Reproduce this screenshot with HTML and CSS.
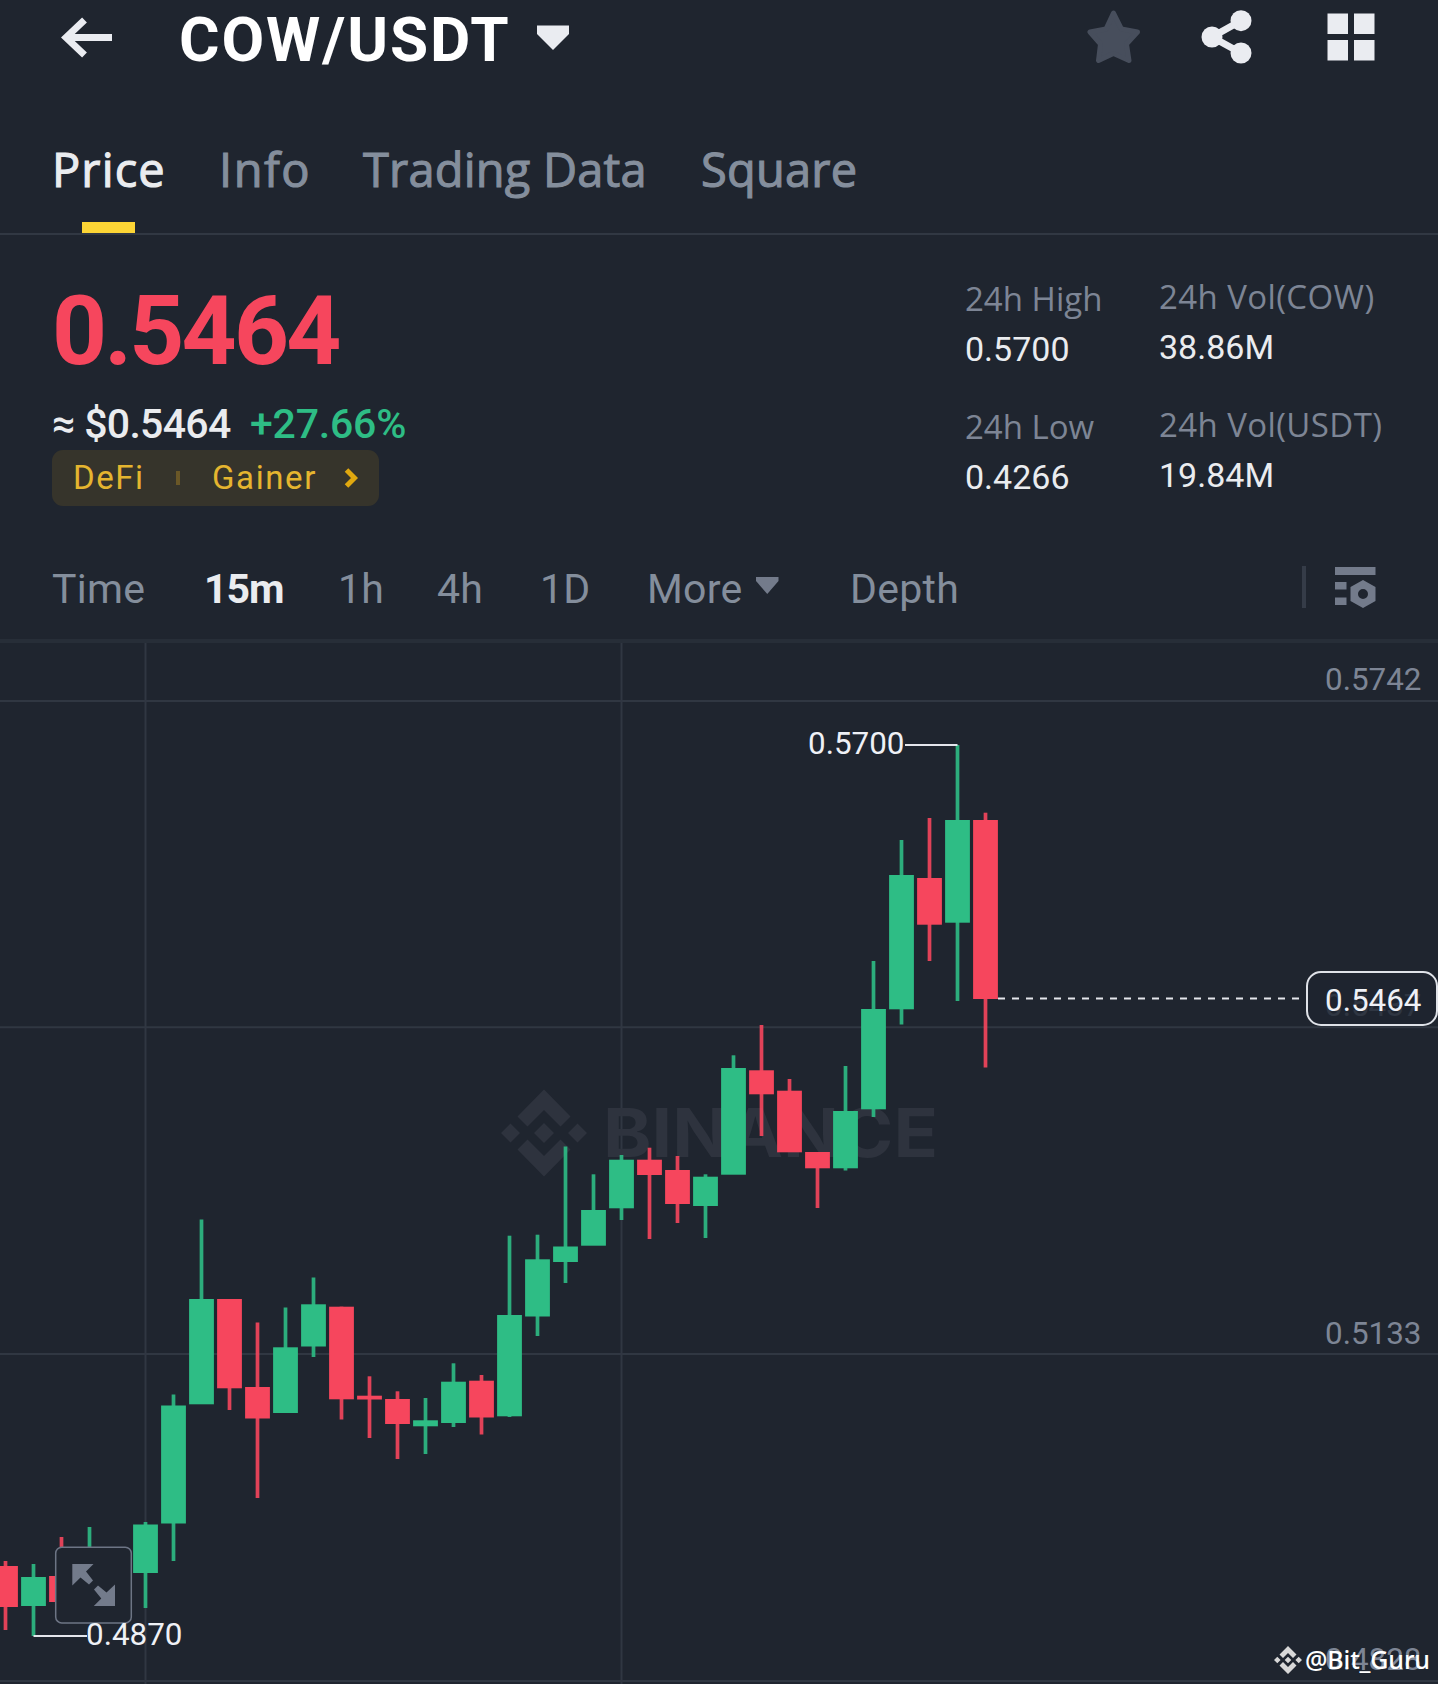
FILE: index.html
```html
<!DOCTYPE html>
<html lang="en">

<head>
    <meta charset="UTF-8">
    <meta name="viewport" content="width=device-width, initial-scale=1.0">
    <title>COW/USDT</title>
    <link rel="stylesheet" href="styles.css">
</head>

<body>
    <header class="header">
        <svg class="back" width="52" height="74" viewBox="61 0 52 74">
            <path d="M112 37.500H66M84.500 20L66 37.500L84.500 55" />
        </svg>
        <h1>COW/USDT</h1>
        <svg class="caret" width="32" height="74" viewBox="537 0 32 74">
            <path d="M537 25.500H569V34L553 50L537 34Z" />
        </svg>
        <div class="actions">
            <svg class="star" width="54" height="74" viewBox="1087 0 54 74">
                <path d="M1113.500 13L1121.500 29L1137.500 32L1126.500 44L1129 60.500L1113.500 53.500L1098.500 60.500L1100.500 44L1090 32L1106 29Z" />
            </svg>
            <svg width="52" height="74" viewBox="1201 0 52 74">
                <path class="share-line" d="M1241 20.700L1212 37L1241 53" />
                <circle cx="1241" cy="20.700" r="10.500" />
                <circle cx="1212" cy="37" r="10.500" />
                <circle cx="1241" cy="53" r="10.500" />
            </svg>
            <svg width="48" height="74" viewBox="1327 0 48 74">
                <path d="M1327.500 13.500h20.500v20.500h-20.500zM1354 13.500h20.500v20.500h-20.500zM1327.500 40h20.500v20.500h-20.500zM1354 40h20.500v20.500h-20.500z" />
            </svg>
        </div>
    </header>

    <nav class="tabs">
        <span class="tab active">Price</span>
        <span class="tab tab-info">Info</span>
        <span class="tab">Trading Data</span>
        <span class="tab">Square</span>
    </nav>

    <section class="summary">
        <div class="price-box">
            <div class="price">0.5464</div>
            <div class="sub-price">
                <span class="usd">≈ $0.5464</span>
                <span class="change">+27.66%</span>
            </div>
            <div class="tags">
                <span class="tag-defi">DeFi</span>
                <i class="tag-line"></i>
                <span class="tag-gainer">Gainer</span>
                <svg width="14" height="20" viewBox="0 0 14 20">
                    <path d="M2.500 2L10.500 10L2.500 18" />
                </svg>
            </div>
        </div>
        <div class="stats">
            <div class="stat">
                <span class="label">24h High</span>
                <span class="value">0.5700</span>
            </div>
            <div class="stat">
                <span class="label">24h Low</span>
                <span class="value">0.4266</span>
            </div>
        </div>
        <div class="stats stats-vol">
            <div class="stat">
                <span class="label">24h Vol(COW)</span>
                <span class="value">38.86M</span>
            </div>
            <div class="stat">
                <span class="label">24h Vol(USDT)</span>
                <span class="value">19.84M</span>
            </div>
        </div>
    </section>

    <nav class="intervals">
        <span>Time</span>
        <span class="active">15m</span>
        <span>1h</span>
        <span>4h</span>
        <span>1D</span>
        <span>More</span>
        <svg width="23" height="17" viewBox="0 0 23 17">
            <path d="M0 0H22.500V4L11.250 17L0 4Z" />
        </svg>
        <span>Depth</span>
        <i class="divider"></i>
        <svg width="41" height="42" viewBox="1335 566 41 42">
            <path d="M1335 567h40.500v8h-40.500zM1335 582h11.500v7.500h-11.500zM1335 597.500h11.500v7.500h-11.500z" />
            <path fill-rule="evenodd" d="M1363 580L1375.500 587V601L1363 608L1350.500 601V587ZM1363 589a5 5 0 1 0 0 10a5 5 0 1 0 0 -10Z" />
        </svg>
    </nav>

    <main class="chart">
        <svg id="chart" width="1438" height="1041" viewBox="0 643 1438 1041">
            <g class="grid">
                <path d="M0 701H1438M0 1027.300H1438M0 1354H1438M0 1681H1438" />
                <path d="M145.500 643V1684M621.500 643V1684" />
            </g>

            <g class="watermark">
                <path d="M544 1089.500L570.500 1116.500L560.500 1126.500L544 1110L527.500 1126.500L517.500 1116.500Z" />
                <path d="M544 1176.500L570.500 1149.500L560.500 1139.500L544 1156L527.500 1139.500L517.500 1149.500Z" />
                <path d="M510.500 1123.500L520 1133L510.500 1142.500L501 1133ZM544 1123L554 1133L544 1143L534 1133ZM577.500 1123.500L587 1133L577.500 1142.500L568 1133Z" />
                <text x="603" y="1157" textLength="335" lengthAdjust="spacingAndGlyphs">BINANCE</text>
            </g>

            <g id="candles"></g>

            <g class="axis">
                <text x="1325" y="690">0.5742</text>
                <text x="1325" y="1016">0.5437</text>
                <text x="1325" y="1344">0.5133</text>
                <text x="1325" y="1670">0.4828</text>
            </g>

            <path class="leader" d="M905 745H957.500M33.500 1636H87" />
            <text class="mark" x="808" y="754">0.5700</text>

            <path class="last-line" d="M998 998.500H1300" />
            <rect class="last-box" x="1307" y="972" width="130" height="53" rx="14" />
            <text class="mark" x="1325" y="1011">0.5464</text>

            <g class="expand">
                <rect x="55.700" y="1547.300" width="75.600" height="75.600" rx="6" />
                <path d="M72.300 1564H93.500L86 1571.500L93 1580.500L89 1584.500L80.500 1577.500L72.300 1585.500Z" />
                <path d="M115 1606H93.800L101.300 1598.500L94 1589.500L98 1585.500L106.500 1592.500L115 1584.500Z" />
            </g>
            <text class="mark" x="86" y="1645">0.4870</text>

            <g class="author">
                <path d="M1288 1646L1296.500 1654.500L1293 1658L1288 1653L1283 1658L1279.500 1654.500ZM1288 1674L1296.500 1665.500L1293 1662L1288 1667L1283 1662L1279.500 1665.500ZM1277.300 1656.700L1280.600 1660L1277.300 1663.300L1274 1660ZM1288 1656.700L1291.300 1660L1288 1663.300L1284.700 1660ZM1298.700 1656.700L1302 1660L1298.700 1663.300L1295.400 1660Z" />
                <text x="1305" y="1669" textLength="125">@Bit_Guru</text>
            </g>
        </svg>
    </main>

    <script>
        // [x, high, bodyTop, bodyBottom, low, up]
        const candles = [
            [5.5, 1561, 1566, 1607, 1630, 0],
            [33.5, 1564, 1577, 1606, 1636, 1],
            [61.5, 1537, 1576, 1602, 1602, 0],
            [89.5, 1527, 1560, 1600, 1600, 1],
            [145.5, 1522, 1524.5, 1573, 1608, 1],
            [173.5, 1394.5, 1405.5, 1523.5, 1561, 1],
            [201.5, 1219.5, 1299, 1404.3, 1404, 1],
            [229.5, 1299, 1299, 1388.3, 1410, 0],
            [257.5, 1322.5, 1387, 1418.5, 1498, 0],
            [285.5, 1307.5, 1347.3, 1413, 1413, 1],
            [313.5, 1277.5, 1304.3, 1346.5, 1357, 1],
            [341.5, 1306.7, 1306.7, 1399.3, 1419.5, 0],
            [369.5, 1376.3, 1395.7, 1399.5, 1438, 0],
            [397.5, 1391.3, 1399, 1424, 1459, 0],
            [425.5, 1398, 1420.3, 1426.3, 1454, 1],
            [453.5, 1363.3, 1381.7, 1423, 1427, 1],
            [481.5, 1375, 1380.7, 1417.5, 1434.5, 0],
            [509.5, 1235.7, 1315, 1416.3, 1417, 1],
            [537.5, 1234.7, 1259.3, 1316.5, 1336, 1],
            [565.5, 1146.5, 1246.5, 1262, 1283, 1],
            [593.5, 1174.3, 1210, 1245.7, 1245, 1],
            [621.5, 1155, 1159.7, 1208.3, 1220, 1],
            [649.5, 1147.7, 1159.7, 1175, 1239, 0],
            [677.5, 1156, 1170, 1204, 1223, 0],
            [705.5, 1174.3, 1176.7, 1206, 1238, 1],
            [733.5, 1055.3, 1068, 1174.7, 1174, 1],
            [761.5, 1025, 1070.3, 1094.3, 1136, 0],
            [789.5, 1079, 1090.7, 1152.3, 1152, 0],
            [817.5, 1152, 1152, 1168.3, 1208, 0],
            [845.5, 1066, 1111, 1168.3, 1170.5, 1],
            [873.5, 961, 1009, 1109.3, 1117, 1],
            [901.5, 840, 875, 1009.3, 1024.5, 1],
            [929.5, 818, 878, 924.7, 961, 0],
            [957.5, 745, 820, 922.7, 1001, 1],
            [985.5, 812.7, 820, 999, 1067.5, 0]
        ];

        const group = document.getElementById('candles');
        group.innerHTML = candles.map(([x, high, top, bottom, low, up]) => `
            <g class="${up ? 'up' : 'down'}">
                <rect class="wick" x="${x - 1.85}" y="${high}" width="3.7" height="${low - high}" />
                <rect x="${x - 12.4}" y="${top}" width="24.8" height="${bottom - top}" />
            </g>`).join('');
    </script>
</body>

</html>
```
FILE: styles.css
```css
* {
    margin: 0;
    padding: 0;
    box-sizing: border-box;
}

body {
    width: 1438px;
    height: 1684px;
    overflow: hidden;
    background-color: #1f252f;
    color: #eaecef;
    font-family: Roboto, "Liberation Sans", sans-serif;
}

svg {
    display: block;
}

.header {
    display: flex;
    align-items: flex-start;
    height: 74px;
    padding: 0 63px 0 61px;
    fill: #eaecf1;
}

.back {
    fill: none;
    stroke: #eaecf1;
    stroke-width: 7;
}

h1 {
    width: 357px;
    margin-left: 66px;
    color: #fff;
    font-size: 62px;
    font-weight: 700;
    line-height: 80px;
    letter-spacing: 1.9px;
    white-space: nowrap;
}

.caret {
    margin-left: 1px;
}

.actions {
    display: flex;
    margin-left: auto;
}

.actions svg + svg {
    margin-left: 60px;
}

.actions svg:last-child {
    margin-left: 74px;
}

.star {
    fill: #474e5c;
    stroke: #474e5c;
    stroke-width: 5;
    stroke-linejoin: round;
}

.share-line {
    fill: none;
    stroke: #eaecf1;
    stroke-width: 7;
}

.tabs {
    display: grid;
    grid-template-columns: 167px 144px 338px auto;
    height: 161px;
    padding: 65px 0 0 52px;
    border-bottom: 2px solid #313843;
}

.tab {
    position: relative;
    color: #848e9c;
    font-family: "Open Sans", sans-serif;
    font-size: 47px;
    font-weight: 500;
    line-height: 60px;
    letter-spacing: 0.2px;
    white-space: nowrap;
    -webkit-text-stroke: 1.1px currentColor;
}

.tab-info {
    letter-spacing: 1.5px;
}

.tab.active {
    color: #eaecef;
    letter-spacing: 1.1px;
}

.tab.active::after {
    content: "";
    position: absolute;
    left: 30px;
    bottom: 0;
    width: 53px;
    height: 11px;
    background-color: #fcd535;
}

.summary {
    display: flex;
    height: 297px;
    padding: 0 0 0 52px;
}

.price-box {
    width: 914px;
    padding-top: 40px;
}

.price {
    color: #f6465d;
    font-size: 96px;
    font-weight: 700;
    line-height: 112px;
    letter-spacing: -2.8px;
}

.sub-price {
    display: flex;
    margin-top: 12px;
    font-size: 41px;
    font-weight: 500;
    line-height: 50px;
    white-space: nowrap;
}

.usd {
    width: 198px;
    letter-spacing: -0.7px;
}

.change {
    color: #2ebd85;
    letter-spacing: -0.2px;
}

.tags {
    display: flex;
    align-items: center;
    width: 327px;
    height: 56px;
    margin-top: 1px;
    padding-left: 21px;
    border-radius: 11px;
    background-color: #36342b;
    color: #e5b52f;
    font-size: 33px;
    line-height: 58px;
}

.tag-defi {
    width: 103px;
    letter-spacing: 1.5px;
}

.tag-line {
    width: 4px;
    height: 14px;
    background-color: #6a5727;
}

.tag-gainer {
    width: 131px;
    margin-left: 32px;
    letter-spacing: 1.6px;
}

.tags svg {
    margin-left: 1px;
    fill: none;
    stroke: #e0a80f;
    stroke-width: 5;
}

.stats {
    width: 194px;
    margin-left: -1px;
    padding-top: 39px;
}

.stats-vol {
    width: auto;
    margin-left: 0;
    padding-top: 37px;
}

.stat {
    display: flex;
    flex-direction: column;
    height: 128px;
    font-size: 34px;
    line-height: 50px;
    white-space: nowrap;
}

.label {
    color: #7d8595;
    font-family: "Open Sans", sans-serif;
    font-size: 33px;
}

.stats-vol .label {
    letter-spacing: 0.4px;
}

.intervals {
    display: grid;
    grid-template-columns: 152px 134px 99px 103px 107px 109px 94px 452px 33px auto;
    align-items: center;
    height: 111px;
    padding-left: 52px;
    border-bottom: 4px solid #272e38;
    color: #848e9c;
    fill: #737b8b;
    font-size: 41px;
    white-space: nowrap;
}

.intervals span {
    padding-top: 7px;
    letter-spacing: 0.3px;
}

.intervals .active {
    color: #eaecef;
    font-weight: 700;
    letter-spacing: -1px;
}

.divider {
    width: 4px;
    height: 42px;
    margin-top: 2px;
    background-color: #353c48;
}

.intervals svg:last-child {
    margin-top: 2px;
}

.grid path {
    fill: none;
    stroke: #303742;
    stroke-width: 2;
}

.watermark {
    fill: #2e333e;
}

.watermark text {
    font-family: Inter, sans-serif;
    font-size: 67px;
    font-weight: 700;
}

.up {
    fill: #2ebd85;
}

.down {
    fill: #f6465d;
}

.wick {
    opacity: 0.9;
}

.axis,
.mark {
    font-size: 31.4px;
}

.axis {
    fill: #7d8595;
}

.mark {
    fill: #eff1f6;
}

.leader,
.last-line {
    fill: none;
    stroke: #e4e6ec;
    stroke-width: 2;
}

.last-line {
    stroke-dasharray: 7 7;
}

.last-box {
    fill: #1f252f;
    fill-opacity: 0.82;
    stroke: #dfe2e8;
    stroke-width: 2;
}

.expand {
    fill: #737b8b;
}

.expand rect {
    fill: #1f252f;
    stroke: #6d7585;
    stroke-width: 1.5;
}

.author {
    fill: #d8d8d8;
}

.author text {
    fill: #fff;
    font-family: "Noto Sans", sans-serif;
    font-size: 25px;
    font-weight: 500;
}
```
